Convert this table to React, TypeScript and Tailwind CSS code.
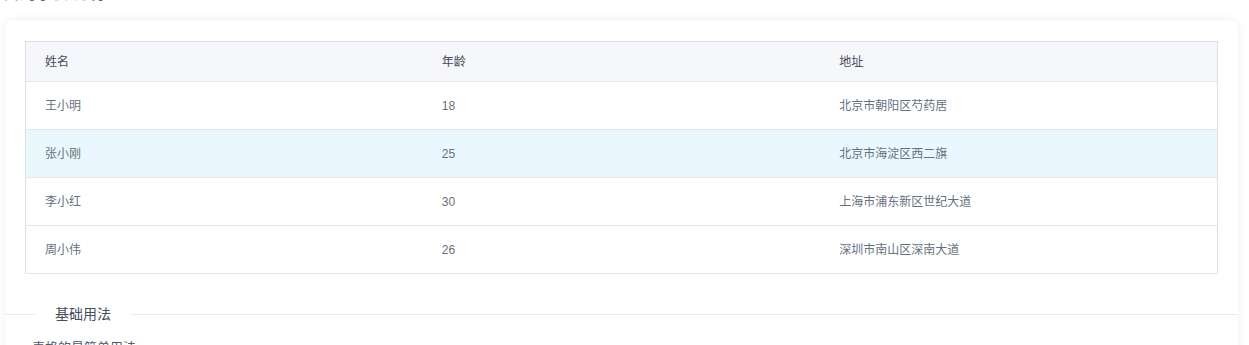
import React from 'react';

interface Person {
  name: string;
  age: number;
  address: string;
}

const people: Person[] = [
  { name: '王小明', age: 18, address: '北京市朝阳区芍药居' },
  { name: '张小刚', age: 25, address: '北京市海淀区西二旗' },
  { name: '李小红', age: 30, address: '上海市浦东新区世纪大道' },
  { name: '周小伟', age: 26, address: '深圳市南山区深南大道' },
];

const font = { fontFamily: '"Liberation Sans", "Noto Sans CJK SC", sans-serif' };

const App: React.FC = () => {
  return (
    <div className="bg-white w-[1249px] h-[345px] overflow-hidden" style={font}>
      <div className="h-[4px] overflow-hidden">
        <p className="text-[17px] leading-[20px] -mt-[16px] pl-[2px] text-[#606266]">代码示例说明</p>
      </div>
      <div className="ml-[5px] mt-[16px] w-[1233px] bg-white rounded-lg shadow-[0_0_10px_rgba(0,0,0,0.07)]">
        <div className="px-5 pt-[21px]">
          <table className="w-full table-fixed border border-[#dcdee2] border-collapse text-[12px] text-[#657180]">
            <thead className="bg-[#f5f7fa]">
              <tr className="h-[40px] border-b border-[#e3e6eb]">
                <th className="text-left font-normal pl-[19px] text-[#464c5b]">姓名</th>
                <th className="text-left font-normal pl-[19px] text-[#464c5b]">年龄</th>
                <th className="text-left font-normal pl-[19px] text-[#464c5b]">地址</th>
              </tr>
            </thead>
            <tbody>
              {people.map((p, i) => (
                <tr key={i} className={`h-[48px] border-b border-[#e3e6eb] ${i === 1 ? 'bg-[#ebf7ff]' : 'bg-white'}`}>
                  <td className="pl-[19px]">{p.name}</td>
                  <td className="pl-[19px]">{p.age}</td>
                  <td className="pl-[19px]">{p.address}</td>
                </tr>
              ))}
            </tbody>
          </table>
        </div>
        <div className="mt-[30px] flex items-center gap-5">
          <div className="w-[30px] h-px bg-[#e8eaec]" />
          <span className="text-[14px] leading-[20px] font-normal text-[#464c5b]">基础用法</span>
          <div className="flex-1 h-px bg-[#e8eaec]" />
        </div>
        <p className="mt-[14px] pl-[27px] text-[13px] text-[#515a6e]">表格的最简单用法。</p>
      </div>
    </div>
  );
};

export default App;
